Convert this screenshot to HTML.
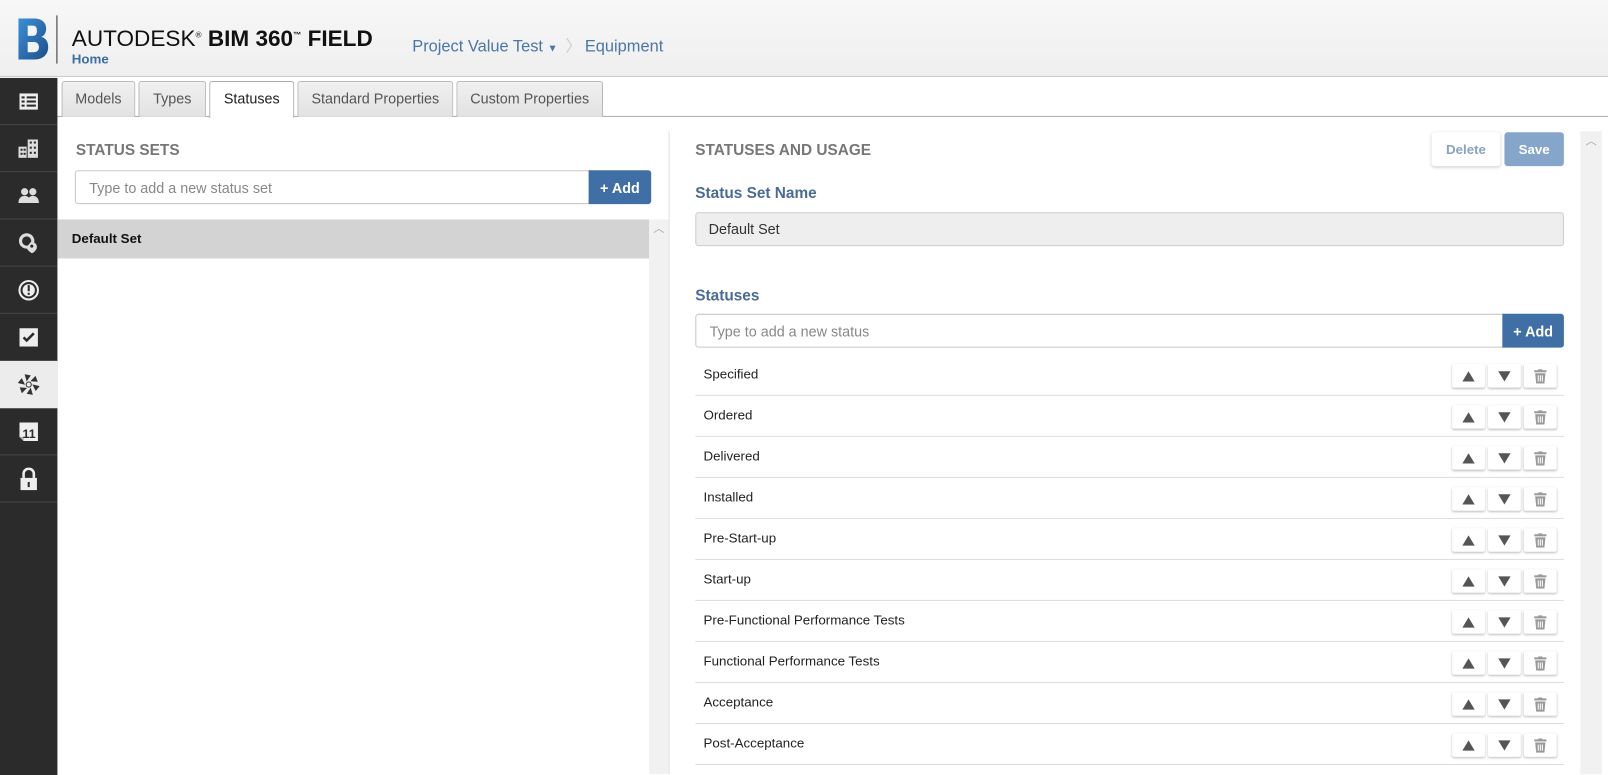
<!DOCTYPE html>
<html><head><meta charset="utf-8"><style>
*{box-sizing:border-box;margin:0;padding:0}
html,body{width:1608px;height:774px;overflow:hidden;background:#fff;font-family:"Liberation Sans",Arial,sans-serif}
#w{position:absolute;left:0;top:0;width:1568px;height:755px;transform:scale(1.02551);transform-origin:0 0}
.a{position:absolute}
.hdr{left:0;top:0;width:1568px;height:75px;background:linear-gradient(#f7f7f7,#efefef);border-bottom:1px solid #c8c8c8}
.side{left:0;top:76px;width:56px;height:680px;background:#2b2b2b}
.si{position:absolute;left:0;width:56px;height:46px;border-bottom:1px solid #474747;display:flex;align-items:center;justify-content:center}
.tab{position:absolute;top:79px;height:35px;border:1px solid #b9b9b9;border-bottom:none;border-radius:3px 3px 0 0;background:linear-gradient(#f0f0f0,#e2e2e2);font-size:14px;color:#555;text-align:center;line-height:33px}
.h{font-weight:bold;font-size:15px;color:#777}
.inp{border:1px solid #c8c8c8;border-radius:3px 0 0 3px;font-size:14px;color:#888;padding-left:13px;display:flex;align-items:center;background:#fff}
.btn{background:#3f6fa4;color:#fff;font-weight:bold;font-size:14px;border-radius:0 3px 3px 0;display:flex;align-items:center;justify-content:center}
.lbl{font-weight:bold;font-size:15px;color:#4b6b97}
.row{position:absolute;left:678px;width:847px;height:40px;border-bottom:1px solid #ddd;font-size:13px;color:#222;padding-left:8px;line-height:38px}
.ib{position:absolute;top:9px;width:32px;height:23px;background:#fff;border-radius:2px;box-shadow:0 1px 2px rgba(0,0,0,.25);display:flex;align-items:center;justify-content:center}
</style></head><body><div id="w">
<div class="a hdr"></div>
<svg class="a" style="left:16px;top:17px" width="32" height="42" viewBox="0 0 32 42"><defs><linearGradient id="g" x1="0" y1="0" x2="1" y2="1"><stop offset="0" stop-color="#3d8fd6"/><stop offset="1" stop-color="#1b4f8c"/></linearGradient></defs><path d="M2 1h15c8 0 12 4 12 10 0 4-2 7-5 8 5 1 7 5 7 10 0 7-5 12-13 12H2z M11 8v10h5c3 0 4-2 4-5s-1-5-4-5z M11 24v10h6c3 0 5-2 5-5s-2-5-5-5z" fill="url(#g)" fill-rule="evenodd"/></svg>
<div class="a" style="left:55px;top:15px;width:1px;height:47px;background:#333"></div>
<div class="a" style="left:70px;top:25px;font-size:22px;color:#111;white-space:nowrap">AUTODESK<sup style="font-size:8px">®</sup> <b>BIM 360<sup style="font-size:8px">™</sup> FIELD</b></div>
<div class="a" style="left:70px;top:50px;font-size:13px;font-weight:bold;color:#3a6ea5">Home</div>
<div class="a" style="left:402px;top:31px;font-size:16px;color:#4a76a8;white-space:nowrap">Project Value Test <span style="font-size:10px">▼</span> <span style="color:#ccc;margin:0 3px">〉</span>Equipment</div>

<div class="a side">
<div class="si" style="top:0"><svg width="18" height="16"><rect x="0" y="0" width="18" height="16" fill="#eee"/><g fill="#2b2b2b"><rect x="2" y="3" width="3" height="2"/><rect x="7" y="3" width="9" height="2"/><rect x="2" y="7" width="3" height="2"/><rect x="7" y="7" width="9" height="2"/><rect x="2" y="11" width="3" height="2"/><rect x="7" y="11" width="9" height="2"/></g></svg></div>
<div class="si" style="top:46px"><svg width="20" height="18"><rect x="0" y="7" width="8" height="11" fill="#ddd"/><rect x="9" y="0" width="10" height="18" fill="#ddd"/><g fill="#2b2b2b"><rect x="2" y="9" width="2" height="2"/><rect x="5" y="9" width="2" height="2"/><rect x="2" y="13" width="2" height="2"/><rect x="5" y="13" width="2" height="2"/><rect x="11" y="2" width="2" height="2"/><rect x="15" y="2" width="2" height="2"/><rect x="11" y="7" width="2" height="2"/><rect x="15" y="7" width="2" height="2"/><rect x="11" y="12" width="2" height="2"/><rect x="15" y="12" width="2" height="2"/></g></svg></div>
<div class="si" style="top:92px"><svg width="20" height="16"><circle cx="6" cy="4" r="3.5" fill="#ddd"/><circle cx="14" cy="4" r="3.5" fill="#ddd"/><path d="M0 15c0-5 3-7 6-7s6 2 6 7zM9 15c0-5 2-7 5-7s6 2 6 7z" fill="#ddd"/></svg></div>
<div class="si" style="top:138px"><svg width="20" height="20"><circle cx="8" cy="8" r="6" fill="none" stroke="#ddd" stroke-width="3"/><path d="M12 9c4 0 6 2 6 5 0 3-4 6-5 6-1-1-5-3-5-6z" fill="#ddd"/><circle cx="13" cy="13" r="1.5" fill="#2b2b2b"/></svg></div>
<div class="si" style="top:184px"><svg width="22" height="22"><circle cx="11" cy="11" r="9" fill="none" stroke="#eee" stroke-width="2"/><circle cx="11" cy="11" r="6" fill="#eee"/><rect x="10" y="6" width="2" height="6" fill="#2b2b2b"/><rect x="10" y="13.5" width="2" height="2" fill="#2b2b2b"/></svg></div>
<div class="si" style="top:230px"><svg width="18" height="18"><rect width="18" height="18" fill="#eee"/><path d="M4 9l3 3 7-7" stroke="#2b2b2b" stroke-width="2.5" fill="none"/></svg></div>
<div class="si" style="top:276px;background:#ececec;border-bottom-color:#ececec"><svg width="22" height="22" viewBox="-11 -11 22 22"><g fill="#333"><path d="M-2-3L-4-10 2-9z"/><path d="M-2-3L-4-10 2-9z" transform="rotate(60)"/><path d="M-2-3L-4-10 2-9z" transform="rotate(120)"/><path d="M-2-3L-4-10 2-9z" transform="rotate(180)"/><path d="M-2-3L-4-10 2-9z" transform="rotate(240)"/><path d="M-2-3L-4-10 2-9z" transform="rotate(300)"/></g><circle r="2.5" fill="none" stroke="#333" stroke-width="1"/></svg></div>
<div class="si" style="top:322px"><svg width="20" height="20"><path d="M1 1h18v18H5L1 15z" fill="#eee"/><path d="M1 15h4v4" fill="#aaa"/><text x="4" y="16" font-size="12" font-weight="bold" fill="#2b2b2b" font-family="Liberation Sans">11</text></svg></div>
<div class="si" style="top:368px"><svg width="18" height="22"><path d="M4 10V6a5 5 0 0110 0v4" stroke="#eee" stroke-width="2.5" fill="none"/><rect x="1" y="10" width="16" height="12" fill="#eee"/><rect x="8" y="14" width="2" height="5" fill="#2b2b2b"/></svg></div>
</div>

<div class="a" style="left:56px;top:113px;width:1512px;height:1px;background:#aaa"></div>
<div class="tab" style="left:60px;width:72px">Models</div>
<div class="tab" style="left:135px;width:66px">Types</div>
<div class="tab" style="left:204px;width:83px;background:#fff;color:#222;height:36px;border-color:#aaa">Statuses</div>
<div class="tab" style="left:290px;width:152px">Standard Properties</div>
<div class="tab" style="left:445px;width:143px">Custom Properties</div>

<div class="a h" style="left:74px;top:138px">STATUS SETS</div>
<div class="a inp" style="left:73px;top:166px;width:502px;height:33px">Type to add a new status set</div>
<div class="a btn" style="left:574px;top:166px;width:61px;height:33px">+ Add</div>
<div class="a" style="left:56px;top:214px;width:577px;height:38px;background:#d3d3d3;font-weight:bold;font-size:13px;color:#111;padding-left:14px;line-height:38px">Default Set</div>
<div class="a" style="left:633px;top:214px;width:19px;height:541px;background:#f1f1f1;color:#aaa;font-size:11px;text-align:center;line-height:18px">︿</div>
<div class="a" style="left:652px;top:128px;width:1px;height:627px;background:#e2e2e2"></div>

<div class="a h" style="left:678px;top:138px">STATUSES AND USAGE</div>
<div class="a" style="left:1396px;top:129px;width:67px;height:33px;background:#fff;border-radius:3px;box-shadow:0 1px 3px rgba(0,0,0,.2);color:#8aa2c3;font-weight:bold;font-size:13px;text-align:center;line-height:33px">Delete</div>
<div class="a" style="left:1467px;top:129px;width:58px;height:33px;background:#86a5ca;border-radius:3px;color:#fff;font-weight:bold;font-size:13px;text-align:center;line-height:33px">Save</div>
<div class="a lbl" style="left:678px;top:180px">Status Set Name</div>
<div class="a" style="left:678px;top:207px;width:847px;height:33px;background:#eee;border:1px solid #ccc;border-radius:3px;font-size:14px;color:#333;padding-left:12px;line-height:31px">Default Set</div>
<div class="a lbl" style="left:678px;top:280px">Statuses</div>
<div class="a inp" style="left:678px;top:306px;width:788px;height:33px">Type to add a new status</div>
<div class="a btn" style="left:1465px;top:306px;width:60px;height:33px">+ Add</div>
<div class="a" style="left:1541px;top:128px;width:21px;height:627px;background:#f1f1f1;color:#aaa;font-size:11px;text-align:center;line-height:20px">︿</div>

<div id="rows"></div>
<script>
var n=["Specified","Ordered","Delivered","Installed","Pre-Start-up","Start-up","Pre-Functional Performance Tests","Functional Performance Tests","Acceptance","Post-Acceptance"],h="";
var up='<svg width="14" height="12"><path d="M7 1L13 11H1z" fill="#555"/></svg>',dn='<svg width="14" height="12"><path d="M1 1H13L7 11z" fill="#555"/></svg>',tr='<svg width="12" height="14"><rect x="0" y="1" width="12" height="2" fill="#999"/><rect x="4" y="0" width="4" height="2" fill="#999"/><path d="M1 4h10l-1 10H2z" fill="#999"/><g fill="#fff"><rect x="3.5" y="6" width="1" height="6"/><rect x="5.5" y="6" width="1" height="6"/><rect x="7.5" y="6" width="1" height="6"/></g></svg>';
for(var i=0;i<n.length;i++){h+='<div class="row" style="top:'+(346+i*40)+'px">'+n[i]+'<div class="ib" style="left:738px">'+up+'</div><div class="ib" style="left:773px">'+dn+'</div><div class="ib" style="left:808px">'+tr+'</div></div>';}
document.getElementById("rows").innerHTML=h;
</script>
</div></body></html>
